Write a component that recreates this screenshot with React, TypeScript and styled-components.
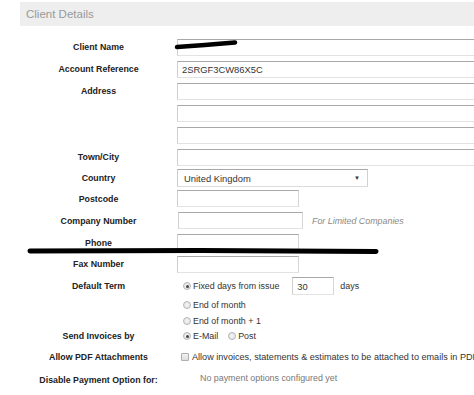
import styled, { createGlobalStyle } from 'styled-components';

const GlobalStyle = createGlobalStyle`
  html, body {
    margin: 0;
    padding: 0;
    background: #ffffff;
    overflow: hidden;
  }
  body {
    font-family: "Liberation Sans", Arial, sans-serif;
    color: #333333;
  }
`;

const Page = styled.div`
  position: relative;
  width: 474px;
  height: 395px;
  padding: 2px 0 0 20px;
  box-sizing: border-box;
  overflow: hidden;
`;

const Header = styled.div`
  height: 24px;
  background: #eeeeee;
  color: #9a9a9a;
  font-size: 11.5px;
  display: flex;
  align-items: center;
  padding-left: 6px;
`;

const Form = styled.div`
  margin-top: 10px;
  display: flex;
  flex-direction: column;
`;

const Row = styled.div<{ $h: number; $top?: boolean }>`
  display: grid;
  grid-template-columns: 157px 1fr;
  height: ${(p) => p.$h}px;
  align-items: ${(p) => (p.$top ? 'start' : 'center')};
`;

const Label = styled.div<{ $lh?: number }>`
  text-align: center;
  font-weight: bold;
  font-size: 8.8px;
  color: #222222;
  white-space: nowrap;
  line-height: ${(p) => (p.$lh ? `${p.$lh}px` : 'normal')};
`;

const Field = styled.div`
  display: flex;
  align-items: center;
  gap: 9px;
  white-space: nowrap;
`;

const TextInput = styled.div<{ $w: number }>`
  box-sizing: border-box;
  width: ${(p) => p.$w}px;
  height: 17px;
  border: 1px solid;
  border-color: #a8a8a8 #d6d6d6 #e2e2e2 #cfcfcf;
  background: #ffffff;
  font-size: 9.4px;
  color: #333333;
  padding: 0 4px;
  display: flex;
  align-items: center;
  flex-shrink: 0;
`;

const SelectBox = styled.div`
  box-sizing: border-box;
  width: 191px;
  height: 18px;
  border: 1px solid;
  border-color: #a8a8a8 #d0d0d0 #dcdcdc #cccccc;
  background: #ffffff;
  font-size: 9.4px;
  color: #333333;
  padding: 0 7px 0 6px;
  display: flex;
  align-items: center;
  justify-content: space-between;
`;

const Arrow = styled.span`
  font-size: 6px;
  color: #333333;
`;

const Hint = styled.span`
  font-style: italic;
  font-size: 8.9px;
  color: #8a8a8a;
`;

const Options = styled.div`
  display: flex;
  flex-direction: column;
`;

const OptionLine = styled.div<{ $h: number }>`
  height: ${(p) => p.$h}px;
  display: flex;
  align-items: center;
  padding-left: 6px;
  font-size: 8.9px;
  color: #333333;
  white-space: nowrap;
`;

const Radio = styled.span<{ $on?: boolean }>`
  box-sizing: border-box;
  width: 8px;
  height: 8px;
  border-radius: 50%;
  border: 1px solid #b4b4b4;
  background: radial-gradient(circle, #f4f4f4 0%, #e2e2e2 100%);
  margin-right: 2px;
  display: inline-flex;
  align-items: center;
  justify-content: center;
  flex-shrink: 0;
  &::after {
    content: '';
    width: 3px;
    height: 3px;
    border-radius: 50%;
    background: ${(p) => (p.$on ? '#444444' : 'transparent')};
  }
`;

const Choice = styled.span<{ $gap?: number }>`
  display: inline-flex;
  align-items: center;
  margin-right: ${(p) => p.$gap ?? 0}px;
`;

const DaysInput = styled(TextInput)`
  height: 18px;
  margin: 0 6px 0 13px;
`;

const CheckLine = styled.div`
  display: flex;
  align-items: center;
  padding-left: 4px;
  font-size: 9.1px;
  color: #333333;
  white-space: nowrap;
`;

const Checkbox = styled.span`
  box-sizing: border-box;
  width: 8px;
  height: 8px;
  border: 1px solid #adadad;
  border-radius: 1px;
  background: linear-gradient(#f2f2f2, #dedede);
  margin-right: 3px;
  flex-shrink: 0;
`;

const Note = styled.div`
  padding: 0 0 4px 23px;
  font-size: 8.9px;
  color: #777777;
  white-space: nowrap;
`;

const Redactions = styled.svg`
  position: absolute;
  top: 0;
  left: 0;
  pointer-events: none;
`;

export default function App() {
  return (
    <>
      <GlobalStyle />
      <Page>
        <Header>Client Details</Header>
        <Form>
          <Row $h={22}>
            <Label>Client Name</Label>
            <TextInput $w={320} />
          </Row>
          <Row $h={22}>
            <Label>Account Reference</Label>
            <TextInput $w={320}>2SRGF3CW86X5C</TextInput>
          </Row>
          <Row $h={22}>
            <Label>Address</Label>
            <TextInput $w={320} />
          </Row>
          <Row $h={22}>
            <Label />
            <TextInput $w={320} />
          </Row>
          <Row $h={22}>
            <Label />
            <TextInput $w={320} />
          </Row>
          <Row $h={22}>
            <Label>Town/City</Label>
            <TextInput $w={320} />
          </Row>
          <Row $h={20}>
            <Label>Country</Label>
            <SelectBox>
              United Kingdom
              <Arrow>▼</Arrow>
            </SelectBox>
          </Row>
          <Row $h={21}>
            <Label>Postcode</Label>
            <TextInput $w={122} />
          </Row>
          <Row $h={23}>
            <Label>Company Number</Label>
            <Field>
              <TextInput $w={125} style={{ marginLeft: 1 }} />
              <Hint>For Limited Companies</Hint>
            </Field>
          </Row>
          <Row $h={21}>
            <Label>Phone</Label>
            <TextInput $w={122} />
          </Row>
          <Row $h={22}>
            <Label>Fax Number</Label>
            <TextInput $w={122} />
          </Row>
          <Row $h={54} $top>
            <Label $lh={22}>Default Term</Label>
            <Options>
              <OptionLine $h={22}>
                <Radio $on />
                Fixed days from issue
                <DaysInput $w={42}>30</DaysInput>
                days
              </OptionLine>
              <OptionLine $h={16}>
                <Radio />
                End of month
              </OptionLine>
              <OptionLine $h={16}>
                <Radio />
                End of month + 1
              </OptionLine>
            </Options>
          </Row>
          <Row $h={14}>
            <Label>Send Invoices by</Label>
            <OptionLine $h={14}>
              <Choice $gap={10}>
                <Radio $on />
                E-Mail
              </Choice>
              <Choice>
                <Radio />
                Post
              </Choice>
            </OptionLine>
          </Row>
          <Row $h={28}>
            <Label>Allow PDF Attachments</Label>
            <CheckLine>
              <Checkbox />
              Allow invoices, statements &amp; estimates to be attached to emails in PDF format
            </CheckLine>
          </Row>
          <Row $h={18}>
            <Label>Disable Payment Option for:</Label>
            <Note>No payment options configured yet</Note>
          </Row>
          <Row $h={20}>
            <Label />
            <CheckLine>
              <Checkbox />
            </CheckLine>
          </Row>
        </Form>
        <Redactions width="474" height="395" viewBox="0 0 474 395">
          <path
            d="M177 47 C 192 46, 212 44.5, 235 42.5"
            stroke="#000"
            strokeWidth="4.5"
            strokeLinecap="round"
            fill="none"
          />
          <path
            d="M30 251 L 200 250.5 L 376 251.5"
            stroke="#000"
            strokeWidth="5"
            strokeLinecap="round"
            fill="none"
          />
        </Redactions>
      </Page>
    </>
  );
}
